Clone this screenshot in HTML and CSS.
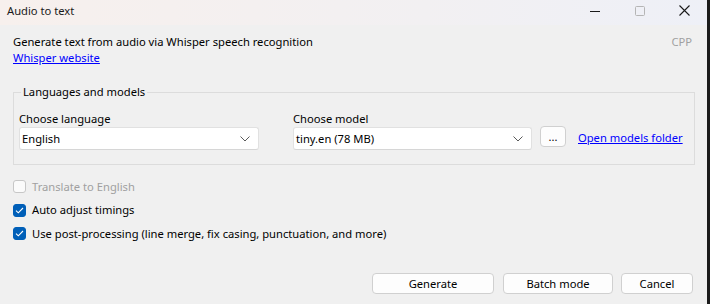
FILE: index.html
```html
<!DOCTYPE html>
<html lang="en">
<head>
  <meta charset="UTF-8">
  <meta name="viewport" content="width=device-width, initial-scale=1.0">
  <title>Audio to text</title>
  <link rel="stylesheet" href="styles.css">
</head>
<body>
  <div class="window">
    <div class="titlebar">
      <span class="title">Audio to text</span>
      <div class="caption-buttons">
        <span class="cap">
          <svg width="10" height="10" viewBox="0 0 10 10"><path d="M0 5.5h10" stroke="#1a1a1a" stroke-width="1"/></svg>
        </span>
        <span class="cap">
          <svg width="10" height="10" viewBox="0 0 10 10"><rect x="0.5" y="0.5" width="9" height="9" rx="1" fill="none" stroke="#b5b5b5"/></svg>
        </span>
        <span class="cap">
          <svg width="11" height="11" viewBox="0 0 11 11"><path d="M0.5 0.5l10 10M10.5 0.5l-10 10" stroke="#1a1a1a" stroke-width="1.1"/></svg>
        </span>
      </div>
    </div>

    <div class="content">
      <div class="intro">
        <div>
          <div>Generate text from audio via Whisper speech recognition</div>
          <a href="#" class="link">Whisper website</a>
        </div>
        <span class="engine">CPP</span>
      </div>

      <fieldset class="group">
        <legend>Languages and models</legend>
        <div class="group-row">
          <div class="field lang">
            <label>Choose language</label>
            <div class="combo">
              <span>English</span>
              <svg width="10" height="6" viewBox="0 0 10 6"><path d="M0.5 0.5l4.5 4.5 4.5-4.5" fill="none" stroke="#5a5a5a"/></svg>
            </div>
          </div>
          <div class="field model">
            <label>Choose model</label>
            <div class="combo">
              <span>tiny.en (78 MB)</span>
              <svg width="10" height="6" viewBox="0 0 10 6"><path d="M0.5 0.5l4.5 4.5 4.5-4.5" fill="none" stroke="#5a5a5a"/></svg>
            </div>
          </div>
          <button class="btn btn-dots">...</button>
          <a href="#" class="link folder">Open models folder</a>
        </div>
      </fieldset>

      <div class="options">
        <div class="check disabled"><span class="box"></span>Translate to English</div>
        <div class="check"><span class="box on"><svg width="9" height="7" viewBox="0 0 9 7"><path d="M1 3.6l2.3 2.2L8 1" fill="none" stroke="#fff" stroke-width="1.1"/></svg></span>Auto adjust timings</div>
        <div class="check"><span class="box on"><svg width="9" height="7" viewBox="0 0 9 7"><path d="M1 3.6l2.3 2.2L8 1" fill="none" stroke="#fff" stroke-width="1.1"/></svg></span>Use post-processing (line merge, fix casing, punctuation, and more)</div>
      </div>

      <div class="footer">
        <button class="btn btn-generate">Generate</button>
        <button class="btn btn-batch">Batch mode</button>
        <button class="btn btn-cancel">Cancel</button>
      </div>
    </div>
  </div>
  <div class="edge"></div>
</body>
</html>
```

FILE: styles.css
```css
body {
  margin: 0;
  display: flex;
  width: 710px;
  height: 304px;
  overflow: hidden;
  font-family: 'Segoe UI', 'Noto Sans', sans-serif;
  font-size: 11.2px;
  line-height: 16px;
  color: #000;
}
.window {
  width: 707px;
  height: 304px;
  display: flex;
  flex-direction: column;
  background-color: #f0f0f0;
}
.edge {
  flex: 1;
  background-color: #1b1b1b;
}
.titlebar {
  height: 25px;
  flex-shrink: 0;
  display: flex;
  align-items: center;
  justify-content: space-between;
  background: linear-gradient(to right, #f7f0ed, #f2f0f2 60%, #eef0f7);
}
.title {
  padding-left: 7px;
  margin-top: -4px;
  color: #1a1a1a;
}
.caption-buttons {
  display: flex;
  margin-top: -4px;
}
.cap {
  width: 45px;
  height: 20px;
  display: flex;
  align-items: center;
  justify-content: center;
}
.content {
  flex: 1;
  display: flex;
  flex-direction: column;
  padding: 9px 12px 10px 13px;
}
.intro {
  display: flex;
  justify-content: space-between;
  align-items: flex-start;
}
.link {
  color: #0000ff;
  text-decoration: underline;
  white-space: nowrap;
}
.engine {
  color: #a0a0a0;
  padding-right: 3px;
}
.group {
  margin: 18px 0 0 0;
  padding: 11px 5px 14px 5px;
  border: 1px solid #dcdcdc;
  min-width: 0;
}
.group legend {
  padding: 0 2px;
  margin-left: 2px;
}
.group-row {
  display: flex;
  align-items: flex-end;
}
.field {
  display: flex;
  flex-direction: column;
}
.field.lang {
  width: 240px;
  margin-right: 34px;
}
.field.model {
  width: 239px;
}
.combo {
  height: 21px;
  display: flex;
  align-items: center;
  justify-content: space-between;
  padding: 0 8px 0 2px;
  background-color: #fff;
  border: 1px solid #e1e1e1;
  border-bottom-color: #d6d6d6;
  border-radius: 3px;
}
.btn {
  font-family: inherit;
  font-size: 11.2px;
  line-height: 16px;
  color: #000;
  background-color: #fdfdfd;
  border: 1px solid #d0d0d0;
  border-radius: 4px;
  padding: 0;
  height: 21px;
}
.btn-dots {
  width: 26px;
  margin: 0 0 3px 8px;
  font-size: 11px;
  line-height: 10px;
}
.folder {
  margin-left: 12px;
  margin-bottom: 4px;
}
.options {
  margin-top: 10px;
  display: flex;
  flex-direction: column;
}
.check {
  height: 23.5px;
  display: flex;
  align-items: center;
}
.box {
  width: 11px;
  height: 11px;
  border: 1px solid #8d8d8d;
  border-radius: 3px;
  margin-right: 6px;
  display: flex;
  align-items: center;
  justify-content: center;
  background-color: #fbfbfb;
}
.box.on {
  background-color: #005fb8;
  border-color: #005fb8;
}
.check.disabled {
  color: #a0a0a0;
}
.check.disabled .box {
  border-color: #c7c7c7;
}
.footer {
  margin-top: auto;
  padding-right: 2px;
  display: flex;
  justify-content: flex-end;
  gap: 8px;
}
.btn-generate {
  width: 122px;
  margin-right: 1px;
}
.btn-batch {
  width: 110px;
}
.btn-cancel {
  width: 72px;
}
```
